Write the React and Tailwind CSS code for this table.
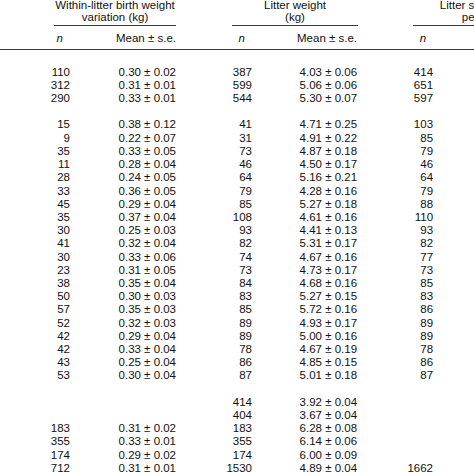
import React from "react";

const pm = (a, b) => (a ? `${a} \u00b1 ${b}` : "");

// n1, mean1, n2, mean2, n3
const rows = [
  null,
  ["110", pm("0.30", "0.02"), "387", pm("4.03", "0.06"), "414"],
  ["312", pm("0.31", "0.01"), "599", pm("5.06", "0.06"), "651"],
  ["290", pm("0.33", "0.01"), "544", pm("5.30", "0.07"), "597"],
  null,
  ["15", pm("0.38", "0.12"), "41", pm("4.71", "0.25"), "103"],
  ["9", pm("0.22", "0.07"), "31", pm("4.91", "0.22"), "85"],
  ["35", pm("0.33", "0.05"), "73", pm("4.87", "0.18"), "79"],
  ["11", pm("0.28", "0.04"), "46", pm("4.50", "0.17"), "46"],
  ["28", pm("0.24", "0.05"), "64", pm("5.16", "0.21"), "64"],
  ["33", pm("0.36", "0.05"), "79", pm("4.28", "0.16"), "79"],
  ["45", pm("0.29", "0.04"), "85", pm("5.27", "0.18"), "88"],
  ["35", pm("0.37", "0.04"), "108", pm("4.61", "0.16"), "110"],
  ["30", pm("0.25", "0.03"), "93", pm("4.41", "0.13"), "93"],
  ["41", pm("0.32", "0.04"), "82", pm("5.31", "0.17"), "82"],
  ["30", pm("0.33", "0.06"), "74", pm("4.67", "0.16"), "77"],
  ["23", pm("0.31", "0.05"), "73", pm("4.73", "0.17"), "73"],
  ["38", pm("0.35", "0.04"), "84", pm("4.68", "0.16"), "85"],
  ["50", pm("0.30", "0.03"), "83", pm("5.27", "0.15"), "83"],
  ["57", pm("0.35", "0.03"), "85", pm("5.72", "0.16"), "86"],
  ["52", pm("0.32", "0.03"), "89", pm("4.93", "0.17"), "89"],
  ["42", pm("0.29", "0.04"), "89", pm("5.00", "0.16"), "89"],
  ["42", pm("0.33", "0.04"), "78", pm("4.67", "0.19"), "78"],
  ["43", pm("0.25", "0.04"), "86", pm("4.85", "0.15"), "86"],
  ["53", pm("0.30", "0.04"), "87", pm("5.01", "0.18"), "87"],
  null,
  ["", "", "414", pm("3.92", "0.04"), ""],
  ["", "", "404", pm("3.67", "0.04"), ""],
  ["183", pm("0.31", "0.02"), "183", pm("6.28", "0.08"), ""],
  ["355", pm("0.33", "0.01"), "355", pm("6.14", "0.06"), ""],
  ["174", pm("0.29", "0.02"), "174", pm("6.00", "0.09"), ""],
  ["712", pm("0.31", "0.01"), "1530", pm("4.89", "0.04"), "1662"],
];

const GroupHead = ({ children, className }) => (
  <th colSpan={2} className="p-0 font-normal align-bottom">
    <div className={"border-b border-[#3a3a3a] pb-[2px] text-center whitespace-nowrap " + className}>
      {children}
    </div>
  </th>
);

const NHead = () => (
  <th className="p-0 pt-[6px] pb-[4px] pr-[17px] text-right font-normal italic border-b border-[#3a3a3a]">n</th>
);

const MeanHead = () => (
  <th className="p-0 pt-[6px] pb-[4px] pr-[10px] text-right font-normal border-b border-[#3a3a3a] whitespace-nowrap">
    Mean {"\u00b1"} s.e.
  </th>
);

export default function App() {
  return (
    <div className="w-[474px] h-[474px] overflow-hidden bg-white">
      <table
        className="-mt-px table-fixed border-collapse w-[548px] text-[11.5px] leading-[12px] text-[#111]"
        style={{ fontFamily: '"Liberation Sans Narrow", "Liberation Sans", Arial, sans-serif' }}
      >
        <colgroup>
          <col className="w-[50px]" />
          <col className="w-[30px]" />
          <col className="w-[106px]" />
          <col className="w-[76px]" />
          <col className="w-[105px]" />
          <col className="w-[76px]" />
          <col className="w-[105px]" />
        </colgroup>
        <thead>
          <tr>
            <th className="p-0" />
            <GroupHead className="ml-[4px] mr-[10px]">
              Within-litter birth weight
              <br />
              variation (kg)
            </GroupHead>
            <GroupHead className="ml-[46px] mr-[9px]">
              Litter weight
              <br />
              (kg)
            </GroupHead>
            <GroupHead className="ml-[46px] mr-[-8px]">
              Litter size (piglets
              <br />
              per litter)
            </GroupHead>
          </tr>
          <tr className="leading-[13px]">
            <th className="p-0 border-b border-[#3a3a3a]" />
            <NHead />
            <MeanHead />
            <NHead />
            <MeanHead />
            <NHead />
            <MeanHead />
          </tr>
        </thead>
        <tbody className="leading-[13.2px]">
          <tr className="h-[3px]">
            <td colSpan={7} className="p-0" />
          </tr>
          {rows.map((r, i) =>
            r ? (
              <tr key={i} className="h-[13.2px]">
                <td className="p-0" />
                <td className="p-0 pr-[10px] text-right">{r[0]}</td>
                <td className="p-0 pr-[10px] text-right whitespace-nowrap">{r[1]}</td>
                <td className="p-0 pr-[10px] text-right">{r[2]}</td>
                <td className="p-0 pr-[10px] text-right whitespace-nowrap">{r[3]}</td>
                <td className="p-0 pr-[10px] text-right">{r[4]}</td>
                <td className="p-0" />
              </tr>
            ) : (
              <tr key={i} className="h-[13.2px]">
                <td colSpan={7} className="p-0 h-[13.2px]" />
              </tr>
            )
          )}
        </tbody>
      </table>
    </div>
  );
}
